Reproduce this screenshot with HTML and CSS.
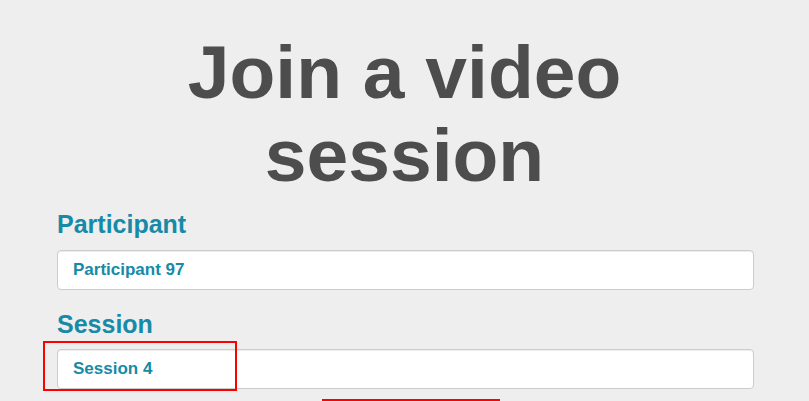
FILE: index.html
```html
<!DOCTYPE html>
<html lang="en">
<head>
  <meta charset="UTF-8" />
  <meta name="viewport" content="width=device-width, initial-scale=1.0" />
  <title>Join a video session</title>
  <link rel="stylesheet" href="styles.css">
</head>
<body>

  <h1>Join a video session</h1>

  <form class="join-form">
    <div class="input-field">
      <label for="participant">Participant</label>
      <input type="text" id="participant" value="Participant 97" />
    </div>

    <div class="input-field">
      <label for="session">Session</label>
      <input type="text" id="session" value="Session 4" />
    </div>
  </form>

  <div class="mark mark-session"></div>
  <div class="mark mark-button"></div>

</body>
</html>
```

FILE: styles.css
```css
body {
  font-family: 'Liberation Sans', Arial, sans-serif;
  background-color: #eeeeee;
  margin: 0;
  padding: 0;
  position: relative;
  height: 401px;
  overflow: hidden;
}
h1 {
  color: #4d4d4d;
  font-size: 75px;
  line-height: 1.1;
  font-weight: bold;
  text-align: center;
  margin: 31px auto 0;
  width: 480px;
}
.join-form {
  padding: 0 55px 0 57px;
}
.input-field {
  display: flex;
  flex-direction: column;
}
.input-field:first-child {
  margin-top: 15px;
}
.input-field + .input-field {
  margin-top: 21px;
}
label {
  color: #178aa8;
  font-size: 25px;
  line-height: 1.1;
  font-weight: bold;
  margin-bottom: 11px;
}
input {
  box-sizing: border-box;
  width: 100%;
  height: 40px;
  padding: 0 15px;
  border: 1px solid #cccccc;
  border-radius: 4px;
  background: white;
  box-shadow: inset 0 1px 1px rgba(0, 0, 0, 0.075);
  font-family: inherit;
  font-size: 17px;
  font-weight: bold;
  color: #168aa6;
}
input:focus {
  outline: none;
  border-color: #66afe9;
}
.mark {
  position: absolute;
  border: 2px solid #ff0000;
  box-sizing: border-box;
}
.mark-session {
  left: 43px;
  top: 341px;
  width: 194px;
  height: 50px;
}
.mark-button {
  left: 322px;
  top: 399px;
  width: 178px;
  height: 2px;
}
```
